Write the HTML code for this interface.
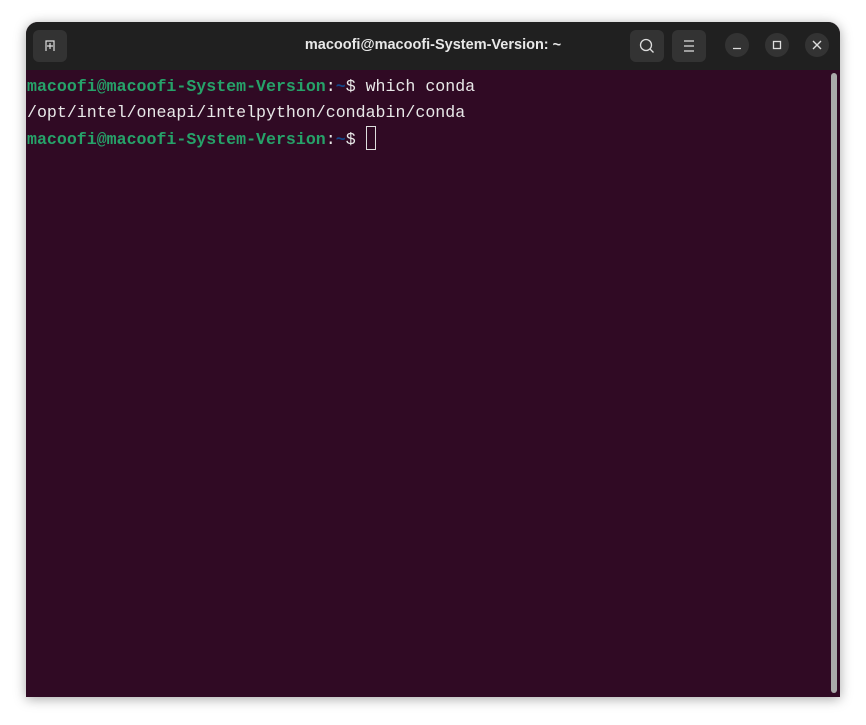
<!DOCTYPE html>
<html><head><style>
body{margin:0;width:866px;height:725px;background:#fff;overflow:hidden;position:relative;font-family:"Liberation Sans",sans-serif}
.win{position:absolute;left:26px;top:22px;width:814px;height:675px;border-radius:12px 12px 0 0;overflow:hidden;box-shadow:0 2px 12px rgba(0,0,0,.35);background:#300a24}
.tb{position:absolute;left:0;top:0;width:814px;height:48px;background:#202020}
.title{position:absolute;left:0;right:0;top:15px;text-align:center;color:#e8e8e8;font-weight:bold;font-size:14.5px}
.btn{position:absolute;top:8px;width:34px;height:32px;border-radius:6px;background:#333}
.circ{position:absolute;top:11px;width:24px;height:24px;border-radius:50%;background:#333}
.term{position:absolute;left:1px;top:52px;font-family:"Liberation Mono",monospace;font-size:16.6px;line-height:26px;color:#e8e8e8;white-space:pre}
.g{color:#26a269;font-weight:bold}.b{color:#12488b;font-weight:bold}
.cur{display:inline-block;width:10px;height:24px;border:1px solid #ddd;vertical-align:-6px;box-sizing:border-box}
.sb{position:absolute;left:805px;top:51px;width:6px;height:620px;border-radius:3px;background:#aaa}
</style></head><body>
<div class="win">
<div class="tb">
<div class="btn" style="left:7px"><svg width="34" height="32"><path d="M13 21V11h8v10M17 13v6M14 16h6" stroke="#ddd" fill="none" stroke-width="1.2"/></svg></div>
<div class="title">macoofi@macoofi-System-Version: ~</div>
<div class="btn" style="left:604px"><svg width="34" height="32"><circle cx="16" cy="15" r="5.5" stroke="#ddd" fill="none" stroke-width="1.3"/><path d="M20 19l3.5 3.5" stroke="#ddd" stroke-width="1.3"/></svg></div>
<div class="btn" style="left:646px"><svg width="34" height="32"><path d="M12 11h10M12 16h10M12 21h10" stroke="#ddd" stroke-width="1.2"/></svg></div>
<div class="circ" style="left:699px"><svg width="24" height="24"><path d="M8 15.5h8" stroke="#ddd" stroke-width="1.3"/></svg></div>
<div class="circ" style="left:739px"><svg width="24" height="24"><rect x="8.5" y="8.5" width="7" height="7" stroke="#ddd" fill="none" stroke-width="1.3"/></svg></div>
<div class="circ" style="left:779px"><svg width="24" height="24"><path d="M8 8l8 8M16 8l-8 8" stroke="#ddd" stroke-width="1.4"/></svg></div>
</div>
<div class="term"><span class="g">macoofi@macoofi-System-Version</span>:<span class="b">~</span>$ which conda
/opt/intel/oneapi/intelpython/condabin/conda
<span class="g">macoofi@macoofi-System-Version</span>:<span class="b">~</span>$ <span class="cur"></span></div>
<div class="sb"></div>
</div>
</body></html>
